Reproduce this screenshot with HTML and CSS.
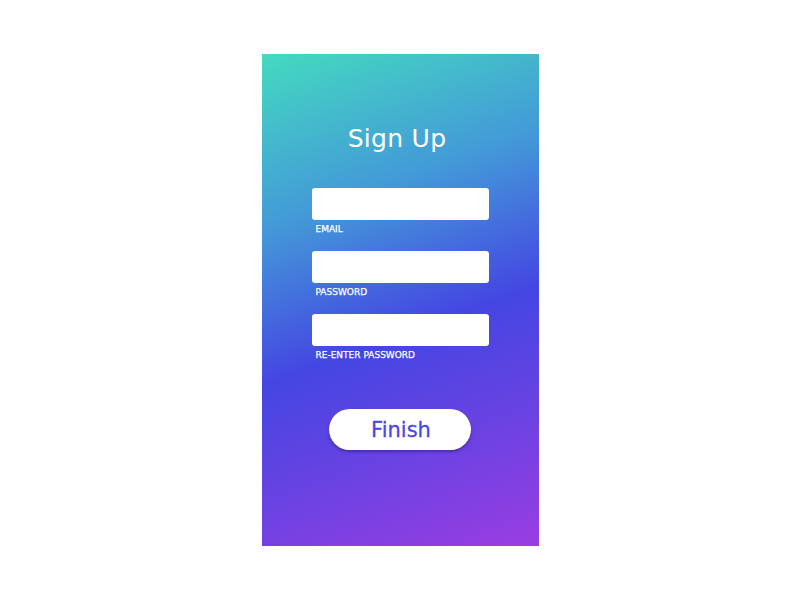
FILE: index.html
```html
<html>
<head>
<meta charset="UTF-8">
<link rel="stylesheet" href="styles.css">
</head>
<body>
<div id="signup_card">
    <h1 class="title">Sign Up</h1>
    <div class="field">
        <input type="text" class="field_input">
        <label class="field_label">EMAIL</label>
    </div>
    <div class="field">
        <input type="password" class="field_input">
        <label class="field_label">PASSWORD</label>
    </div>
    <div class="field">
        <input type="password" class="field_input">
        <label class="field_label">RE-ENTER PASSWORD</label>
    </div>
    <button class="finish_button">Finish</button>
</div>
</body>
</html>
```

FILE: styles.css
```css
body {
    margin: 0;
    background: #ffffff;
    font-family: "DejaVu Sans", "Open Sans", sans-serif;
}

#signup_card {
    width: 277px;
    height: 492px;
    margin: 54px auto 0 auto;
    box-sizing: border-box;
    padding-top: 69px;
    display: flex;
    flex-direction: column;
    align-items: center;
    background: linear-gradient(160deg, #44dac0 0%, #4399d8 30%, #4446e2 56%, #6d42e2 78%, #9a3de2 100%);
}

.title {
    margin: 0 0 0 -6px;
    color: #ffffff;
    font-weight: normal;
    font-size: 25px;
    line-height: 32px;
    letter-spacing: 0.3px;
}

.field {
    width: 177px;
    margin-top: 33px;
    display: flex;
    flex-direction: column;
}

.field + .field {
    margin-top: 17px;
}

.field_input {
    height: 32px;
    border: none;
    border-radius: 3px;
    background: #ffffff;
    outline: none;
}

.field_label {
    margin-top: 4px;
    padding-left: 4px;
    color: #ffffff;
    font-size: 9px;
    line-height: 10px;
    -webkit-text-stroke: 0.25px #ffffff;
}

.finish_button {
    margin-top: 49px;
    padding-left: 8px;
    width: 142px;
    height: 41px;
    border: none;
    border-radius: 21px;
    background: #ffffff;
    color: #4a48de;
    font-family: "DejaVu Sans", "Open Sans", sans-serif;
    font-size: 21px;
    -webkit-text-stroke: 0.3px #4a48de;
    box-shadow: 0 2px 3px rgba(40, 20, 90, 0.45);
}
```
